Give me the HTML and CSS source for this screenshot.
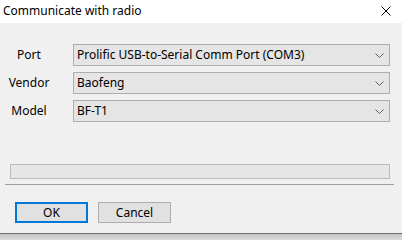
FILE: index.html
```html
<!DOCTYPE html>
<html>
<head>
<meta charset="utf-8">
<link rel="stylesheet" href="styles.css">
</head>
<body>
<div class="window">
  <div class="titlebar">
    <span class="title">Communicate with radio</span>
    <svg class="close" width="10" height="10" viewBox="0 0 10 10"><path d="M0.5 0.5 L9.5 9.5 M9.5 0.5 L0.5 9.5" stroke="#000" stroke-width="1" fill="none"/></svg>
  </div>
  <div class="content">
    <div class="form">
      <label class="lbl">Port</label>
      <div class="combo"><span>Prolific USB-to-Serial Comm Port (COM3)</span><svg class="chev" width="9" height="5" viewBox="0 0 9 5"><path d="M0.5 0.5 L4.5 4.5 L8.5 0.5" stroke="#606060" stroke-width="1" fill="none"/></svg></div>
      <label class="lbl">Vendor</label>
      <div class="combo"><span>Baofeng</span><svg class="chev" width="9" height="5" viewBox="0 0 9 5"><path d="M0.5 0.5 L4.5 4.5 L8.5 0.5" stroke="#606060" stroke-width="1" fill="none"/></svg></div>
      <label class="lbl">Model</label>
      <div class="combo"><span>BF-T1</span><svg class="chev" width="9" height="5" viewBox="0 0 9 5"><path d="M0.5 0.5 L4.5 4.5 L8.5 0.5" stroke="#606060" stroke-width="1" fill="none"/></svg></div>
    </div>
    <div class="progress"></div>
    <div class="separator"></div>
    <div class="buttons">
      <button class="btn default">OK</button>
      <button class="btn">Cancel</button>
    </div>
  </div>
  <div class="shadow"></div>
</div>
</body>
</html>
```
FILE: styles.css
```css
html, body {
  margin: 0;
  padding: 0;
}
body {
  width: 402px;
  height: 240px;
  overflow: hidden;
  font-family: "Noto Sans", "Open Sans", sans-serif;
  font-size: 12px;
  color: #000;
  background: #f0f0f0;
}
.window {
  display: flex;
  flex-direction: column;
  height: 240px;
}
.titlebar {
  height: 23px;
  background: #fff;
  display: flex;
  align-items: center;
  justify-content: space-between;
  padding: 0 11px 0 3px;
  box-sizing: border-box;
}
.title {
  font-size: 12px;
  line-height: 16px;
  margin-top: -1px;
}
.close {
  display: block;
  margin-top: -1px;
}
.content {
  height: 210px;
  background: #f0f0f0;
  box-sizing: border-box;
  padding-top: 21px;
}
.form {
  display: grid;
  grid-template-columns: 57px 317px;
  column-gap: 16px;
  row-gap: 6px;
  grid-auto-rows: 22px;
}
.lbl {
  text-align: center;
  align-self: center;
  line-height: 16px;
  padding-left: 1px;
}
.combo {
  background: #e5e5e5;
  border: 1px solid #adadad;
  display: flex;
  align-items: center;
  justify-content: space-between;
  padding: 0 4px 0 3px;
  line-height: 16px;
}
.chev {
  display: block;
  margin-right: 1px;
}
.progress {
  margin: 42px 12px 0 10px;
  height: 15px;
  box-sizing: border-box;
  background: #e6e6e6;
  border: 1px solid #bcbcbc;
}
.separator {
  margin: 5px 8px 0 5px;
  height: 1px;
  background: #a0a0a0;
}
.buttons {
  display: flex;
  gap: 10px;
  padding: 17px 0 0 15px;
}
.btn {
  width: 73px;
  height: 21px;
  box-sizing: border-box;
  background: #e1e1e1;
  border: 1px solid #adadad;
  font-family: inherit;
  font-size: 12px;
  color: #000;
  padding: 0;
  line-height: 16px;
}
.btn.default {
  border: 2px solid #0078d7;
}
.shadow {
  flex: 1;
  border-top: 1px solid #6e6e6e;
  background: linear-gradient(#c4c4c4, #dcdcdc);
}
```
